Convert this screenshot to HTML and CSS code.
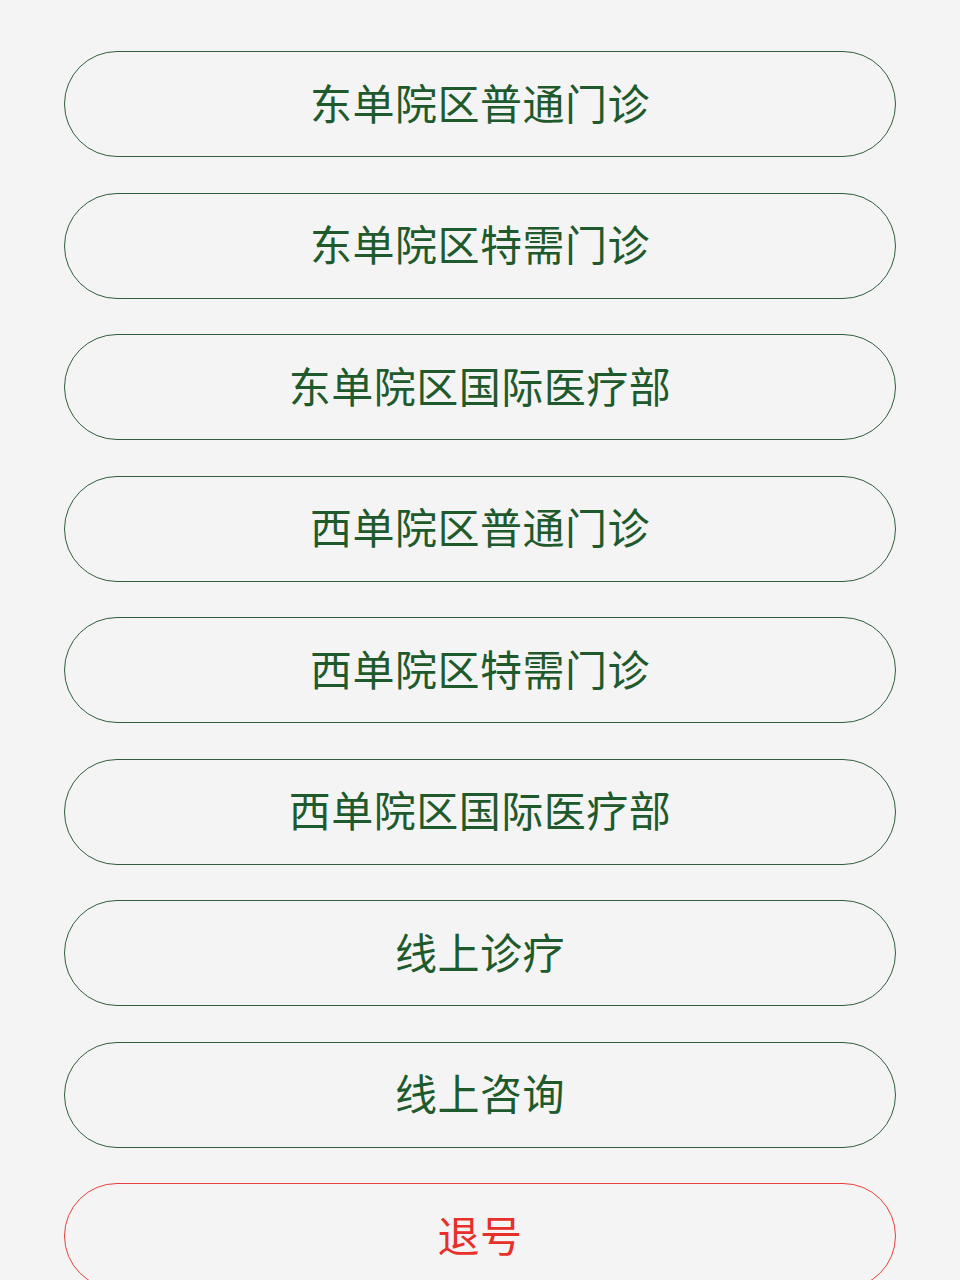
FILE: index.html
```html
<!DOCTYPE html>
<html lang="zh">
<head>
<meta charset="utf-8">
<link rel="stylesheet" href="styles.css">
</head>
<body>
<div class="list">
  <div class="btn">东单院区普通门诊</div>
  <div class="btn">东单院区特需门诊</div>
  <div class="btn">东单院区国际医疗部</div>
  <div class="btn">西单院区普通门诊</div>
  <div class="btn">西单院区特需门诊</div>
  <div class="btn">西单院区国际医疗部</div>
  <div class="btn">线上诊疗</div>
  <div class="btn">线上咨询</div>
  <div class="btn btn-red">退号</div>
</div>
</body>
</html>
```
FILE: styles.css
```css
html, body {
  margin: 0;
  padding: 0;
  background: #f4f4f4;
  font-family: "Noto Sans CJK SC", "Noto Sans", sans-serif;
}
.list {
  display: flex;
  flex-direction: column;
  gap: 35.5px;
  padding: 51px 64px 0 64px;
  height: 1280px;
  box-sizing: border-box;
  overflow: hidden;
}
.btn {
  flex: none;
  height: 106px;
  box-sizing: border-box;
  border: 1.5px solid #2f5f3c;
  border-radius: 53px;
  display: flex;
  align-items: center;
  justify-content: center;
  padding-bottom: 6px;
  color: #1e5a2c;
  font-size: 42px;
  letter-spacing: 0.5px;
}
.btn-red {
  border-color: #e8403a;
  color: #e8302a;
}
```
